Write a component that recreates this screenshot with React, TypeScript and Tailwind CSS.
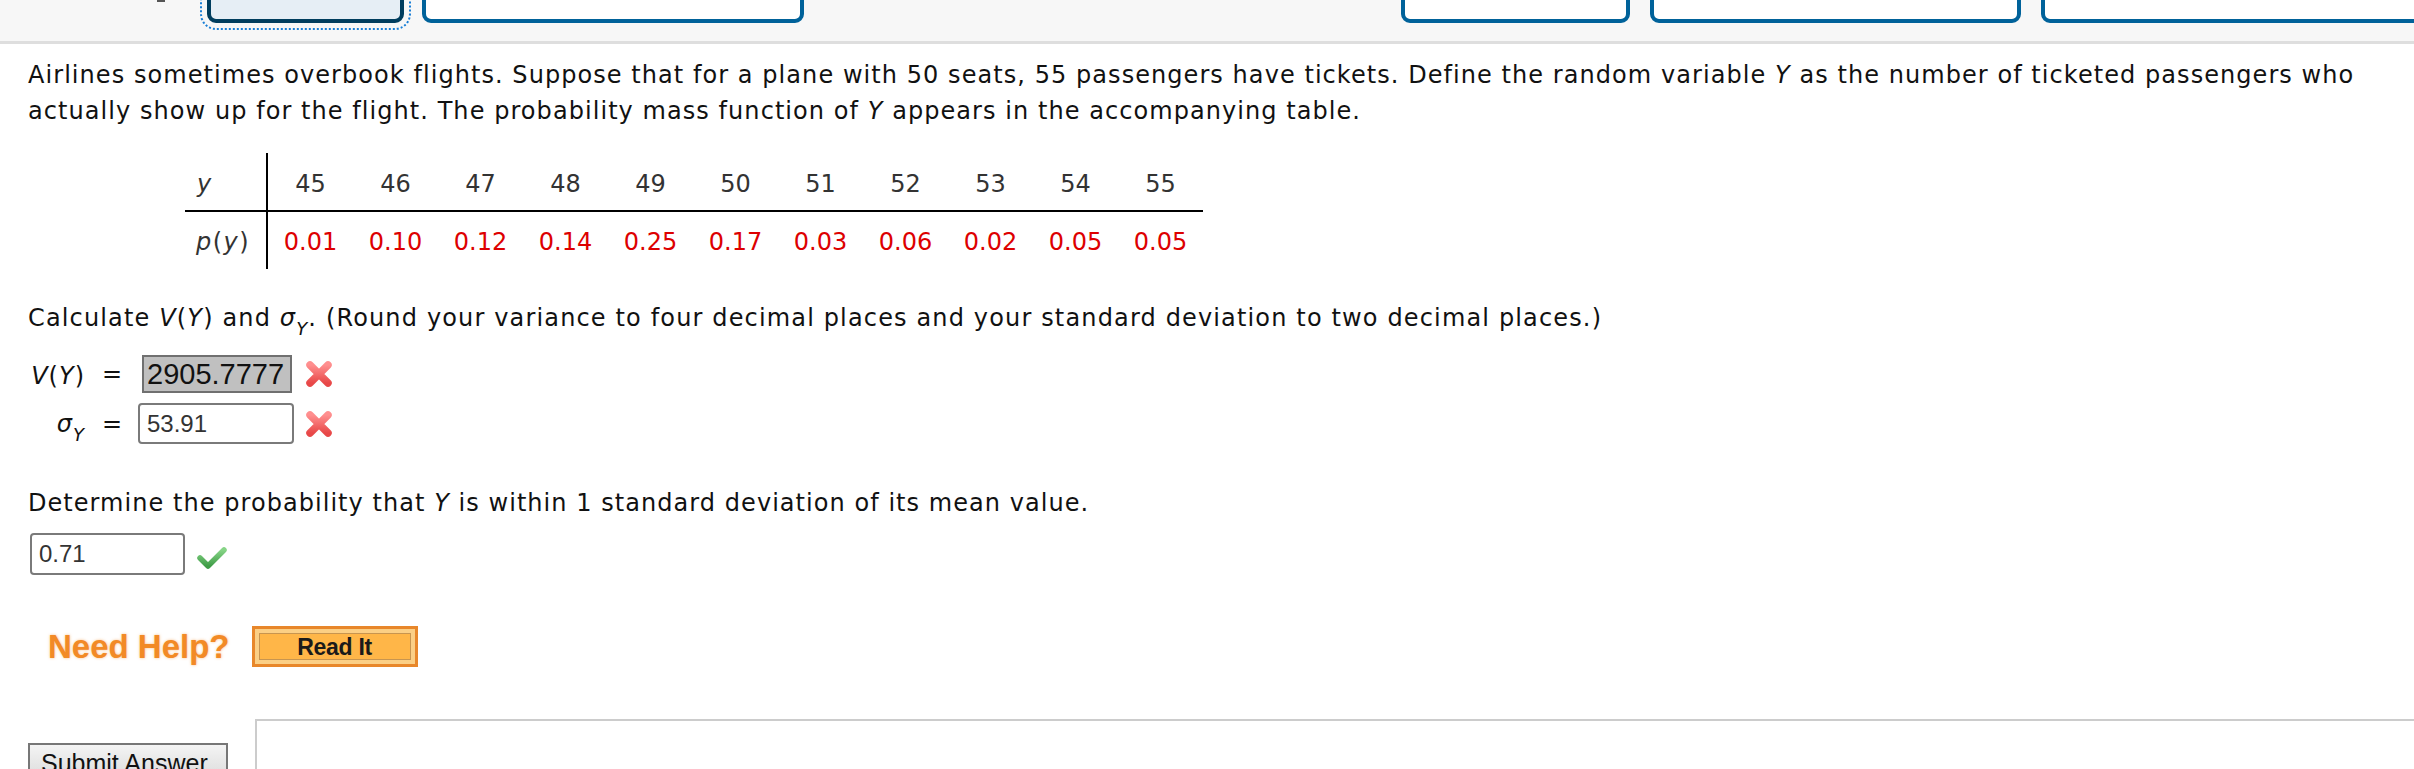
import React from "react";

const verdana = "font-['DejaVu_Sans',Verdana,sans-serif]";
const arial = "font-['Liberation_Sans',Arial,Helvetica,sans-serif]";

function RedX() {
  return (
    <svg width="28" height="26" viewBox="0 0 28 26" className="shrink-0">
      <defs>
        <linearGradient id="xg" x1="0" y1="0" x2="0" y2="1">
          <stop offset="0" stopColor="#ff8f8f" />
          <stop offset="1" stopColor="#e84848" />
        </linearGradient>
      </defs>
      <path d="M5 4 L23 22 M23 4 L5 22" stroke="url(#xg)" strokeWidth="7.5" strokeLinecap="round" fill="none" />
    </svg>
  );
}

function Check() {
  return (
    <svg width="30" height="25" viewBox="0 0 30 25" className="shrink-0">
      <defs>
        <linearGradient id="cg" x1="0" y1="0" x2="0" y2="1">
          <stop offset="0" stopColor="#86d486" />
          <stop offset="1" stopColor="#3f9c47" />
        </linearGradient>
      </defs>
      <path d="M3 13 L11 21 L27 5" stroke="url(#cg)" strokeWidth="5.5" strokeLinecap="round" strokeLinejoin="round" fill="none" />
    </svg>
  );
}

const ys = ["45", "46", "47", "48", "49", "50", "51", "52", "53", "54", "55"];
const ps = ["0.01", "0.10", "0.12", "0.14", "0.25", "0.17", "0.03", "0.06", "0.02", "0.05", "0.05"];

export default function App() {
  return (
    <div className={`w-[2414px] min-h-[769px] bg-white text-[#111] ${verdana}`}>
      {/* top bar */}
      <div className="h-[44px] bg-[#f7f7f7] border-b-[3px] border-[#dedede] flex items-end pb-[18px] overflow-hidden">
        <div className="self-start shrink-0 ml-[157px] w-[8px] h-[2px] bg-[#555]" />
        <div className="ml-[42px] w-[197px] h-[60px] shrink-0 bg-[#e6eef5] border-4 border-[#003d5e] rounded-[9px] outline-2 outline-dotted outline-[#1a7fd6] outline-offset-[5px]" />
        <div className="ml-[18px] w-[382px] h-[60px] shrink-0 bg-white border-4 border-[#00629a] rounded-[9px]" />
        <div className="ml-[597px] w-[229px] h-[60px] shrink-0 bg-white border-4 border-[#00629a] rounded-[9px]" />
        <div className="ml-[20px] w-[371px] h-[60px] shrink-0 bg-white border-4 border-[#00629a] rounded-[9px]" />
        <div className="ml-[20px] w-[420px] h-[60px] shrink-0 bg-white border-4 border-[#00629a] rounded-[9px]" />
      </div>

      <div className="pl-[28px]">
        <p className="mt-[13px] text-[24px] leading-[36px] tracking-[1.06px] whitespace-nowrap">
          Airlines sometimes overbook flights. Suppose that for a plane with 50 seats, 55 passengers have tickets. Define the random variable <i>Y</i> as the number of ticketed passengers who
          <br />
          actually show up for the flight. The probability mass function of <i>Y</i> appears in the accompanying table.
        </p>

        {/* table */}
        <div className="mt-[24px] ml-[157px] grid grid-cols-[83px_repeat(11,85px)] text-[24px] leading-[36px] text-[#333]">
          <div className="h-[59px] pt-[13px] pl-[12px] border-r-2 border-b-2 border-black tracking-[1px]">
            <i>y</i>
          </div>
          {ys.map((v, i) => (
            <div key={"y" + i} className="h-[59px] pt-[13px] text-center border-b-2 border-black">
              {v}
            </div>
          ))}
          <div className="h-[57px] pt-[12px] pl-[11px] border-r-2 border-black tracking-[1.5px]">
            <i>p</i>(<i>y</i>)
          </div>
          {ps.map((v, i) => (
            <div key={"p" + i} className="h-[57px] pt-[12px] text-center text-[#dd0000]">
              {v}
            </div>
          ))}
        </div>

        <p className="mt-[31px] text-[24px] leading-[36px] tracking-[1.15px] whitespace-nowrap">
          Calculate <i>V</i>(<i>Y</i>) and <i>σ</i>
          <sub className="bottom-[-0.5em]">
            <i>Y</i>
          </sub>
          . (Round your variance to four decimal places and your standard deviation to two decimal places.)
        </p>

        <div className="mt-[19px] flex items-center h-[38px] text-[24px] leading-[36px]">
          <div className="w-[57px] text-right pt-[3px] tracking-[1px] whitespace-nowrap">
            <i>V</i>(<i>Y</i>)
          </div>
          <div className="ml-[17px] w-[20px] text-center">=</div>
          <div className={`ml-[20px] w-[150px] h-[38px] bg-[#c0c0c0] border-2 border-[#707070] flex items-center pl-[3px] text-[29px] leading-none text-[#111] ${arial}`}>
            2905.7777
          </div>
          <div className="ml-[13px] flex items-center">
            <RedX />
          </div>
        </div>

        <div className="mt-[10px] flex items-center h-[41px] text-[24px] leading-[36px]">
          <div className="w-[57px] text-right tracking-[1px] whitespace-nowrap">
            <i>σ</i>
            <sub className="bottom-[-0.5em]">
              <i>Y</i>
            </sub>
          </div>
          <div className="ml-[17px] w-[20px] text-center">=</div>
          <div className={`ml-[16px] w-[156px] h-[41px] bg-white border-2 border-[#7a7a7a] rounded-[4px] flex items-center pl-[7px] text-[24px] leading-none text-[#333] ${arial}`}>
            53.91
          </div>
          <div className="ml-[11px] flex items-center">
            <RedX />
          </div>
        </div>

        <p className="mt-[41px] text-[24px] leading-[36px] tracking-[1.05px] whitespace-nowrap">
          Determine the probability that <i>Y</i> is within 1 standard deviation of its mean value.
        </p>

        <div className="mt-[12px] flex items-center h-[42px]">
          <div className={`ml-[2px] w-[155px] h-[42px] bg-white border-2 border-[#7a7a7a] rounded-[4px] flex items-center pl-[7px] text-[24px] leading-none text-[#333] ${arial}`}>
            0.71
          </div>
          <div className="ml-[12px] flex items-center pt-[6px]">
            <Check />
          </div>
        </div>

        <div className={`mt-[51px] flex items-center h-[41px] ${arial}`}>
          <div className="ml-[20px] text-[33px] leading-none font-bold text-[#f28a26] [text-shadow:0_0_3px_rgba(242,138,38,0.55)] whitespace-nowrap">
            Need Help?
          </div>
          <div className="ml-[22px] w-[166px] h-[41px] shrink-0 border-[3px] border-[#e8872a] bg-[#fbcf85] p-[4px] flex">
            <div className="flex-1 border border-[#c8954f] bg-[#ffb648] flex items-center justify-center text-[23px] font-bold leading-none text-[#1a1a1a] pt-[2px] tracking-[-0.3px]">
              Read It
            </div>
          </div>
        </div>

        <div className="mt-[52px] flex items-start">
          <div className={`mt-[24px] w-[200px] shrink-0 border-2 border-[#777] bg-gradient-to-b from-[#f4f4f4] to-[#dcdcdc] px-[11px] pt-[3px] text-[25px] leading-[30px] text-[#111] whitespace-nowrap ${arial}`}>
            Submit Answer
          </div>
          <div className="ml-[27px] flex-1 h-[120px] border-2 border-[#cccccc] border-r-0 bg-white" />
        </div>
      </div>
    </div>
  );
}
